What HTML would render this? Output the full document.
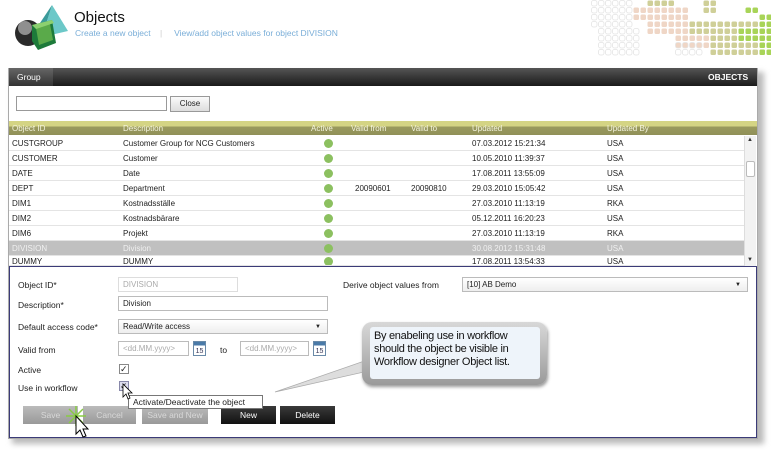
<!DOCTYPE html>
<html><head><meta charset="utf-8"><style>
*{box-sizing:border-box;margin:0;padding:0}
body{width:771px;height:450px;background:#fff;font-family:"Liberation Sans",sans-serif;font-size:8px;color:#222;position:relative;overflow:hidden}
.a{position:absolute}
.row{position:absolute;left:9px;width:735px;height:15px;border-bottom:1px solid #e4e4e4;font-size:8px;line-height:15px}
.row span{position:absolute}
.dot{width:9px;height:9px;border-radius:50%;background:#8cc060;top:3px;left:315px}
.lbl{position:absolute;left:18px;font-size:8.5px;color:#222}
.inp{position:absolute;border:1px solid #bbb;background:#fff;font-size:8px;line-height:14px;padding-left:4px;height:15px}
.btn{position:absolute;top:406px;height:18px;font-size:8.5px;text-align:center;line-height:18px}
.g{background:linear-gradient(#bbb,#999);color:#d8d8d8}
.k{background:linear-gradient(#3a3a3a,#111);color:#fff}
</style></head><body>
<div class="a" style="left:12px;top:72px;width:752px;height:372px;background:#bbb;filter:blur(3px)"></div>
<div class="a" style="left:8px;top:68px;width:750px;height:371px;background:#fff;border:1px solid #aaa"></div>
<!-- logo -->
<svg class="a" style="left:12px;top:3px" width="58" height="50">
<polygon points="40,2 56,28 30,34" fill="#6cc8c8"/>
<polygon points="40,2 30,34 24,26" fill="#3a9a9a"/>
<circle cx="16" cy="30" r="13" fill="#2a2a2a"/><circle cx="13" cy="25" r="7" fill="#bbb" opacity=".7"/>
<polygon points="20,22 40,17 44,40 26,47 20,38" fill="#1d7a3a"/>
<polygon points="24,25 38,21 41,37 27,42" fill="#5aaa4a"/>
<polygon points="20,22 40,17 42,20 24,26" fill="#8cd070"/>
</svg>
<div class="a" style="left:74px;top:9px;font-size:15px;color:#111">Objects</div>
<div class="a" style="left:75px;top:28px;font-size:8.5px;color:#7aaed8">Create a new object &nbsp;&nbsp;&nbsp;<span style="color:#ccc">|</span>&nbsp;&nbsp;&nbsp;&nbsp; View/add object values for object DIVISION</div>
<!-- dots deco -->
<svg class="a" style="left:535px;top:0" width="240" height="62">
<defs>
<pattern id="pw" width="7" height="7" patternUnits="userSpaceOnUse"><rect x=".5" y=".5" width="5.5" height="5.5" rx="2" fill="none" stroke="#e4e4e4" stroke-width=".8"/></pattern>
<pattern id="pp" width="7" height="7" patternUnits="userSpaceOnUse"><rect x=".5" y=".5" width="5.5" height="5.5" rx="1.5" fill="#efd6c6"/></pattern>
<pattern id="py" width="7" height="7" patternUnits="userSpaceOnUse"><rect x=".5" y=".5" width="5.5" height="5.5" rx="1.5" fill="#cfcf98"/></pattern>
<pattern id="pg" width="7" height="7" patternUnits="userSpaceOnUse"><rect x=".5" y=".5" width="5.5" height="5.5" rx="1.5" fill="#a8d458"/></pattern>
</defs>
<rect x="56" y="0" width="42" height="28" fill="url(#pw)"/>
<rect x="63" y="28" width="42" height="28" fill="url(#pw)"/>
<rect x="98" y="7" width="56" height="14" fill="url(#pp)"/>
<rect x="112" y="21" width="56" height="14" fill="url(#pp)"/>
<rect x="140" y="35" width="50" height="14" fill="url(#pp)"/>
<rect x="112" y="0" width="28" height="7" fill="url(#py)"/>
<rect x="168" y="0" width="14" height="14" fill="url(#py)"/>
<rect x="154" y="21" width="70" height="14" fill="url(#py)"/>
<rect x="175" y="35" width="56" height="21" fill="url(#py)"/>
<rect x="140" y="42" width="28" height="14" fill="url(#pw)"/>
<rect x="210" y="7" width="14" height="7" fill="url(#pg)"/>
<rect x="224" y="14" width="14" height="42" fill="url(#pg)"/>
<rect x="203" y="28" width="21" height="14" fill="url(#pg)"/>
</svg>
<!-- dark bar -->
<div class="a" style="left:9px;top:68px;width:748px;height:18px;background:linear-gradient(#555,#1a1a1a)"></div>
<div class="a" style="left:9px;top:68px;width:44px;height:18px;background:linear-gradient(#666,#333);color:#fff;font-size:8.5px;line-height:18px;padding-left:8px">Group</div>
<div class="a" style="left:708px;top:68px;color:#fff;font-size:8.5px;font-weight:bold;line-height:18px">OBJECTS</div>
<!-- filter -->
<div class="inp" style="left:16px;top:96px;width:151px;height:15px;border-color:#999"></div>
<div class="a" style="left:170px;top:96px;width:40px;height:16px;border:1px solid #999;background:linear-gradient(#fafafa,#ddd);font-size:8px;line-height:14px;text-align:center">Close</div>
<!-- header -->
<div class="a" style="left:9px;top:121px;width:748px;height:14px;background:linear-gradient(#d4d484 0,#d4d484 40%,#9a9a5e 41%,#909058);color:#f4f4e0;font-size:8px;line-height:16px">
<span class="a" style="left:3px">Object ID</span><span class="a" style="left:114px">Description</span><span class="a" style="left:302px">Active</span><span class="a" style="left:342px">Valid from</span><span class="a" style="left:402px">Valid to</span><span class="a" style="left:463px">Updated</span><span class="a" style="left:598px">Updated By</span></div>
<div class="row" style="top:136px"><span style="left:3px">CUSTGROUP</span><span style="left:114px">Customer Group for NCG Customers</span><span class="a dot"></span><span style="left:463px">07.03.2012 15:21:34</span><span style="left:598px">USA</span></div>
<div class="row" style="top:151px"><span style="left:3px">CUSTOMER</span><span style="left:114px">Customer</span><span class="a dot"></span><span style="left:463px">10.05.2010 11:39:37</span><span style="left:598px">USA</span></div>
<div class="row" style="top:166px"><span style="left:3px">DATE</span><span style="left:114px">Date</span><span class="a dot"></span><span style="left:463px">17.08.2011 13:55:09</span><span style="left:598px">USA</span></div>
<div class="row" style="top:181px"><span style="left:3px">DEPT</span><span style="left:114px">Department</span><span class="a dot"></span><span style="left:346px">20090601</span><span style="left:402px">20090810</span><span style="left:463px">29.03.2010 15:05:42</span><span style="left:598px">USA</span></div>
<div class="row" style="top:196px"><span style="left:3px">DIM1</span><span style="left:114px">Kostnadsställe</span><span class="a dot"></span><span style="left:463px">27.03.2010 11:13:19</span><span style="left:598px">RKA</span></div>
<div class="row" style="top:211px"><span style="left:3px">DIM2</span><span style="left:114px">Kostnadsbärare</span><span class="a dot"></span><span style="left:463px">05.12.2011 16:20:23</span><span style="left:598px">USA</span></div>
<div class="row" style="top:226px"><span style="left:3px">DIM6</span><span style="left:114px">Projekt</span><span class="a dot"></span><span style="left:463px">27.03.2010 11:13:19</span><span style="left:598px">RKA</span></div>
<div class="row" style="top:241px;background:#c0c0c0;color:#f0f0f0"><span style="left:3px">DIVISION</span><span style="left:114px">Division</span><span class="a dot"></span><span style="left:463px">30.08.2012 15:31:48</span><span style="left:598px">USA</span></div>
<div class="row" style="top:256px;height:10px;overflow:hidden;line-height:15px"><span style="left:3px;top:-2px">DUMMY</span><span style="left:114px;top:-2px">DUMMY</span><span class="a dot" style="top:1px"></span><span style="left:463px;top:-2px">17.08.2011 13:54:33</span><span style="left:598px;top:-2px">USA</span></div>
<div class="a" style="left:744px;top:136px;width:12px;height:130px;background:#f2f2f2;border-left:1px solid #ddd"></div>
<div class="a" style="left:746px;top:161px;width:9px;height:16px;background:#fff;border:1px solid #bbb;border-radius:2px"></div>
<div class="a" style="left:747px;top:137px;font-size:6px;color:#333">▲</div>
<div class="a" style="left:747px;top:257px;font-size:6px;color:#333">▼</div>
<!-- form panel -->
<div class="a" style="left:9px;top:266px;width:748px;height:172px;border:1px solid #3b3b78;background:#fff"></div>
<div class="lbl" style="top:280px">Object ID*</div>
<div class="inp" style="left:118px;top:277px;width:120px;color:#aaa;border-color:#ddd">DIVISION</div>
<div class="lbl" style="top:300px">Description*</div>
<div class="inp" style="left:118px;top:296px;width:210px">Division</div>
<div class="lbl" style="top:322px">Default access code*</div>
<div class="inp" style="left:118px;top:319px;width:210px;background:linear-gradient(#fff,#eee)">Read/Write access<span style="position:absolute;right:6px;font-size:6px">▼</span></div>
<div class="lbl" style="top:345px">Valid from</div>
<div class="inp" style="left:118px;top:341px;width:71px;color:#aaa">&lt;dd.MM.yyyy&gt;</div>
<div class="a" style="left:193px;top:341px;width:13px;height:15px;border:1px solid #6a8aa8;background:linear-gradient(#4a7aa8 0,#4a7aa8 25%,#fff 26%);font-size:7px;text-align:center;line-height:19px;color:#335">15</div>
<div class="lbl" style="left:220px;top:345px">to</div>
<div class="inp" style="left:240px;top:341px;width:69px;color:#aaa">&lt;dd.MM.yyyy&gt;</div>
<div class="a" style="left:313px;top:341px;width:13px;height:15px;border:1px solid #6a8aa8;background:linear-gradient(#4a7aa8 0,#4a7aa8 25%,#fff 26%);font-size:7px;text-align:center;line-height:19px;color:#335">15</div>
<div class="lbl" style="top:365px">Active</div>
<div class="a" style="left:119px;top:364px;width:10px;height:10px;border:1px solid #888;font-size:9px;line-height:9px">✓</div>
<div class="lbl" style="top:383px">Use in workflow</div>
<div class="a" style="left:119px;top:381px;width:10px;height:10px;border:1px solid #88a;background:#dde;font-size:9px;line-height:9px">✓</div>
<div class="lbl" style="left:343px;top:280px">Derive object values from</div>
<div class="inp" style="left:462px;top:277px;width:286px;background:linear-gradient(#fff,#eee)">[10] AB Demo<span style="position:absolute;right:6px;font-size:6px">▼</span></div>
<div class="btn g" style="left:23px;width:55px">Save</div>
<div class="btn g" style="left:83px;width:53px">Cancel</div>
<div class="btn g" style="left:142px;width:66px">Save and New</div>
<div class="btn k" style="left:221px;width:55px">New</div>
<div class="btn k" style="left:280px;width:55px">Delete</div>
<div class="a" style="left:128px;top:395px;width:135px;height:14px;border:1px solid #777;background:#fff;font-size:8.5px;line-height:12px;padding-left:4px">Activate/Deactivate the object</div>
<svg class="a" style="left:66px;top:404px" width="30" height="36"><g stroke="#8c4" stroke-width="1.5"><line x1="10" y1="2" x2="10" y2="22"/><line x1="0" y1="12" x2="20" y2="12"/><line x1="3" y1="5" x2="17" y2="19"/><line x1="17" y1="5" x2="3" y2="19"/></g><path d="M10,12 L10,30 L14,26 L17,33 L20,32 L17,25 L22,25 Z" fill="#fff" stroke="#000" stroke-width="1"/></svg>
<svg class="a" style="left:122px;top:383px" width="14" height="20"><path d="M1,1 L1,14 L4,11 L6,16 L8,15 L6,10 L10,10 Z" fill="#fff" stroke="#000" stroke-width=".8"/></svg>
<svg class="a" style="left:255px;top:318px" width="300" height="80"><polygon points="20,74 118,40 118,52" fill="#ddd" stroke="#aaa" stroke-width=".7"/></svg>
<div class="a" style="left:362px;top:322px;width:185px;height:63px;border-radius:10px;background:linear-gradient(#d8d8d8,#9a9a9a);box-shadow:1px 2px 3px #999"></div>
<div class="a" style="left:370px;top:327px;width:170px;height:52px;background:#eef4fa;border-radius:3px;font-size:11px;line-height:13px;padding:3px 0 0 4px;color:#111;letter-spacing:-.3px">By enabeling use in workflow should the object be visible in Workflow designer Object list.</div>
</body></html>
